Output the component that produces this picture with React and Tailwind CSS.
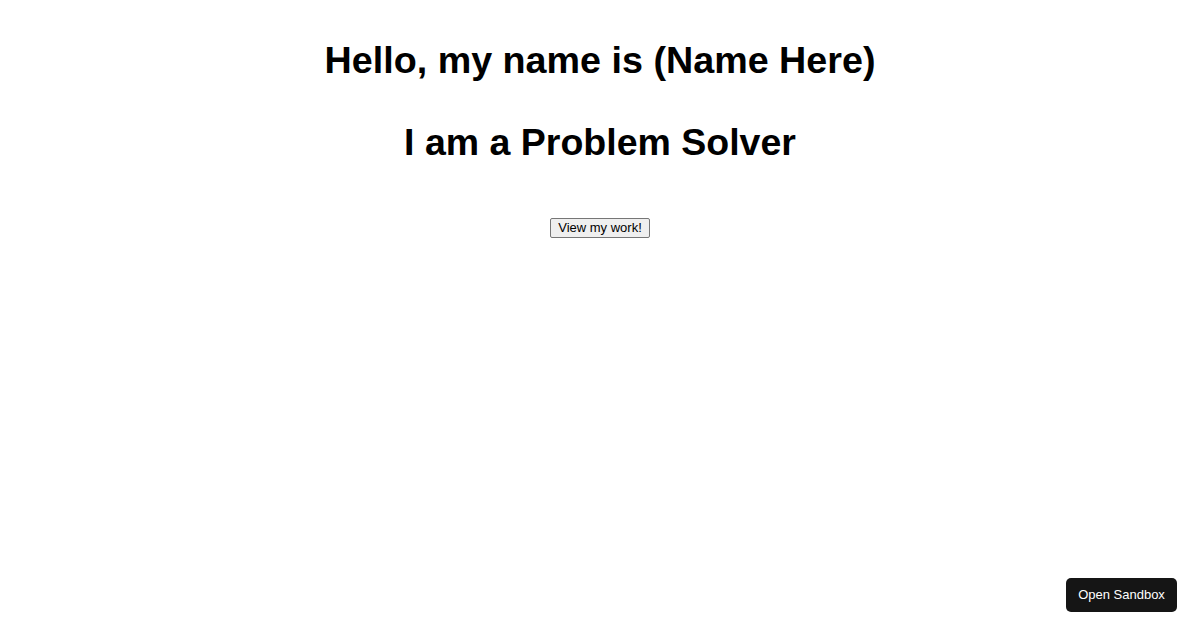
export default function App() {
  return (
    <div className="relative w-[1200px] h-[630px] bg-white text-black overflow-hidden" style={{ fontFamily: '"Liberation Sans", Arial, sans-serif' }}>
      <div className="flex flex-col items-center text-center">
        <h1 className="mt-[39px] text-[37.7px] leading-[43px] font-bold">Hello, my name is (Name Here)</h1>
        <h1 className="mt-[39px] text-[37.5px] leading-[43px] font-bold">I am a Problem Solver</h1>
        <button className="mt-[54px] h-[20px] px-[7px] text-[13px] leading-[16px] bg-[#efefef] border border-[#767676] rounded-[2px] text-black">
          View my work!
        </button>
      </div>
      <button className="absolute right-[23px] bottom-[18px] w-[111px] h-[34px] rounded-[5px] bg-[#151515] text-white text-[13px] flex items-center justify-center">
        Open Sandbox
      </button>
    </div>
  );
}
